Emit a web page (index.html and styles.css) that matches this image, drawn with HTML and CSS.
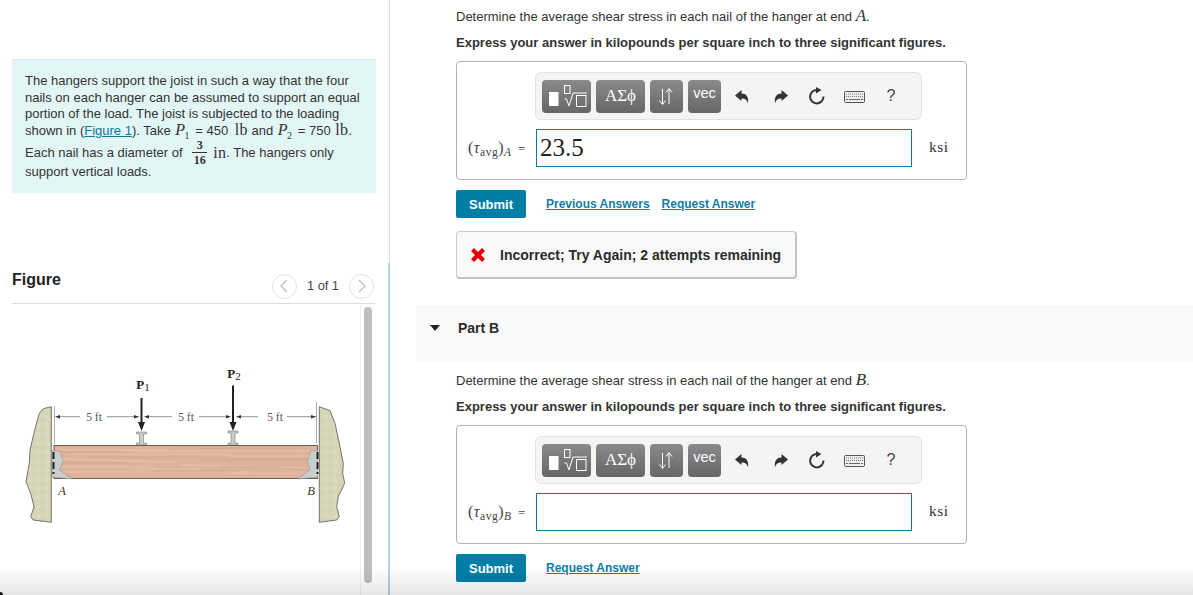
FILE: index.html
```html
<!DOCTYPE html>
<html lang="en">
  <head>
    <meta charset="UTF-8" />
    <title>Part A</title>
    <link rel="stylesheet" href="styles.css">
  </head>
  <body>
    <svg class="icon-defs" width="0" height="0">
      <symbol id="i-math" viewBox="0 0 49 33">
        <rect x="7" y="12" width="9.500" height="14" fill="#fff"/>
        <rect x="22.500" y="5.500" width="5.500" height="8" fill="none" stroke="#fff"/>
        <path d="M22.500 19l2 0 2.500 7 4-13h14" fill="none" stroke="#fff"/>
        <rect x="34.500" y="15.500" width="9.500" height="11" fill="none" stroke="#fff"/>
      </symbol>
      <symbol id="i-arrows" viewBox="0 0 33 33">
        <path d="M12.500 9v15M9.500 20.500l3 4 3-4M19 24V9M16 12.500l3-4 3 4" fill="none" stroke="#fff"/>
      </symbol>
      <symbol id="i-undo" viewBox="0 0 14 15">
        <path d="M0 6.500L6.500 1v3.500c4.500 0 7.500 3 6.500 10-1-4-3-5-6.500-5V12z" fill="#333"/>
      </symbol>
      <symbol id="i-reset" viewBox="0 0 18 18">
        <path d="M15.500 9.500A6.700 6.700 0 1 1 8.500 3" fill="none" stroke="#333" stroke-width="2"/>
        <path d="M8 0l5.500 3L8 6.500z" fill="#333"/>
      </symbol>
      <symbol id="i-keys" viewBox="0 0 21 12">
        <rect x="0.500" y="0.500" width="20" height="11" rx="1" fill="#eee" stroke="#555"/>
        <path d="M2 3h17M2 5.500h17" stroke="#777" stroke-dasharray="1 1"/>
        <path d="M2 8.500h2M5 8.500h11M17 8.500h2" stroke="#666"/>
      </symbol>
      <symbol id="i-prev" viewBox="0 0 10 14">
        <path d="M8 1L2 7l6 6" fill="none" stroke="#c4c4c4" stroke-width="1.500"/>
      </symbol>
    </svg>

    <div class="layout">
      <aside class="left">
        <div class="left-top">
          <div class="intro">
            The hangers support the joist in such a way that the four nails on each hanger can be assumed to support an equal portion of the load. The joist is subjected to the loading shown in (<a href="#">Figure 1</a>). Take <span class="math"><i>P</i><sub>1</sub></span> = 450 <span class="math lb">lb</span> and <span class="math"><i>P</i><sub>2</sub></span> = 750 <span class="math">lb</span>.
            <div class="intro-line">Each nail has a diameter of <span class="frac"><span class="num">3</span><span class="den">16</span></span> <span class="math">in</span>. The hangers only</div>
            <div class="intro-last">support vertical loads.</div>
          </div>
        </div>
        <div class="left-bottom">
          <div class="figure-head">
            <h2>Figure</h2>
            <div class="pager">
              <span class="page-btn"><svg width="10" height="14"><use href="#i-prev"/></svg></span>
              <span>1 of 1</span>
              <span class="page-btn"><svg class="flip" width="10" height="14"><use href="#i-prev"/></svg></span>
            </div>
          </div>
          <div class="figure-body">
            <svg class="joist" viewBox="12 304 348 291" width="348" height="291">
              <defs>
                <pattern id="stone" width="9" height="9" patternUnits="userSpaceOnUse">
                  <rect width="9" height="9" fill="#d6d5b7"/>
                  <circle cx="2.500" cy="2.500" r="1.300" fill="none" stroke="#e4e3cc" stroke-width="0.600"/>
                  <circle cx="7" cy="6.500" r="1" fill="none" stroke="#c6c5a4" stroke-width="0.500"/>
                </pattern>
              </defs>
              <path d="M51.300 406.700L43.300 408.700 39.300 413.300 34.700 430 30 450 29.300 463.300 26 481.700 30.700 493.300 34 506.700 30.700 516.700 33.300 520 51.300 522.300z" fill="url(#stone)" stroke="#555" stroke-width="0.800"/>
              <path d="M319.300 406.700L330 410.700 335 423.300 340 446.700 343.300 463.300 342.700 473.300 344.700 483.300 338.300 496.700 336.700 506.700 339.300 516.700 336.700 520 319.300 522.300z" fill="url(#stone)" stroke="#555" stroke-width="0.800"/>
              <path d="M54.500 406v38M316.500 402v41" stroke="#aaa"/>

              <rect x="54" y="445.500" width="263.500" height="33" fill="#dfb39b" stroke="#6b5a50"/>
              <path d="M56 450h110M70 454h160M56 459l120 3M120 451h195M200 456h117M180 465l135 3M56 467h100M60 472h190M230 473h85M130 469h70" stroke="#e9c6b0" stroke-width="0.800"/>
              <path d="M60 452h70M90 457h140M56 463h70M200 460h110M150 471h90M180 448h120M220 467h60" stroke="#d09f85" stroke-width="0.600"/>

              <path d="M52 450.500L60 451 61.700 458 63.300 461 59.300 470 72.700 479 52 477z" fill="#c9ced0" stroke="#888" stroke-width="0.500"/>
              <path d="M318 450.500L310 451 309 458 307 461 310 470 298 479 318 477z" fill="#c9ced0" stroke="#888" stroke-width="0.500"/>
              <path d="M53.500 452v22M317.500 452v22" stroke="#222" stroke-width="2" stroke-dasharray="7 3"/>

              <path d="M57 416.700h23M107 416.700h32M148 416.700h24M199 416.700h28M240 416.700h18M287 416.700h29" stroke="#777" stroke-width="0.800"/>
              <path d="M55 416.700l5-1.800v3.600zM139 416.700l-5-1.800v3.600zM144 416.700l5-1.800v3.600zM231 416.700l-5-1.800v3.600zM236 416.700l5-1.800v3.600zM316 416.700l-5-1.800v3.600z" fill="#333"/>
              <text class="dim" x="94" y="421">5 ft</text>
              <text class="dim" x="186" y="421">5 ft</text>
              <text class="dim" x="275" y="421">5 ft</text>

              <path d="M141.500 398v26M233 385.500v38.500" stroke="#222" stroke-width="2"/>
              <path d="M138 422h7l-3.500 9zM229.500 422h7l-3.500 9z" fill="#222"/>
              <path d="M136.500 432h10v2h-3v9h3v2h-10v-2h3v-9h-3zM228 431h10v2h-3v10h3v2h-10v-2h3v-10h-3z" fill="#ccc" stroke="#666" stroke-width="0.500"/>

              <text class="load" x="143" y="389">P<tspan class="load-sub" dy="2">1</tspan></text>
              <text class="load" x="234" y="378">P<tspan class="load-sub" dy="2">2</tspan></text>
              <text class="end" x="62" y="495">A</text>
              <text class="end" x="311" y="495">B</text>
            </svg>
            <div class="scroll-track"><div class="scroll-thumb"></div></div>
          </div>
        </div>
      </aside>

      <main class="right">
        <section class="part">
          <p class="task">Determine the average shear stress in each nail of the hanger at end <span class="math-big"><i>A</i></span>.</p>
          <p class="hint">Express your answer in kilopounds per square inch to three significant figures.</p>
          <div class="answer">
            <div class="toolbar">
              <span class="tool tool-math"><svg width="49" height="33"><use href="#i-math"/></svg></span>
              <span class="tool tool-greek">&Alpha;&Sigma;&#981;</span>
              <span class="tool tool-arrows"><svg width="33" height="33"><use href="#i-arrows"/></svg></span>
              <span class="tool tool-vec">vec</span>
              <span class="plain p-undo"><svg width="14" height="15"><use href="#i-undo"/></svg></span>
              <span class="plain p-redo"><svg class="flip" width="14" height="15"><use href="#i-undo"/></svg></span>
              <span class="plain p-reset"><svg width="18" height="18"><use href="#i-reset"/></svg></span>
              <span class="plain p-keys"><svg width="21" height="12"><use href="#i-keys"/></svg></span>
              <span class="plain p-help">?</span>
            </div>
            <div class="answer-row">
              <span class="answer-label">(<i>&tau;</i><sub>avg</sub>)<sub><i>A</i></sub> <span class="eq">=</span></span>
              <div class="answer-input">23.5</div>
              <span class="unit">ksi</span>
            </div>
          </div>
          <div class="actions">
            <button class="submit">Submit</button>
            <a href="#">Previous Answers</a>
            <a href="#">Request Answer</a>
          </div>
          <div class="feedback">
            <svg width="14" height="14" viewBox="0 0 14 14"><path d="M0 3L3 0 7 4 11 0 14 3 10 7 14 11 11 14 7 10 3 14 0 11 4 7z" fill="#e60000"/></svg>
            <span>Incorrect; Try Again; 2 attempts remaining</span>
          </div>
        </section>

        <div class="part-band">
          <span class="caret"></span>
          <h3>Part B</h3>
        </div>

        <section class="part part-b">
          <p class="task">Determine the average shear stress in each nail of the hanger at end <span class="math-big"><i>B</i></span>.</p>
          <p class="hint">Express your answer in kilopounds per square inch to three significant figures.</p>
          <div class="answer answer-b">
            <div class="toolbar">
              <span class="tool tool-math"><svg width="49" height="33"><use href="#i-math"/></svg></span>
              <span class="tool tool-greek">&Alpha;&Sigma;&#981;</span>
              <span class="tool tool-arrows"><svg width="33" height="33"><use href="#i-arrows"/></svg></span>
              <span class="tool tool-vec">vec</span>
              <span class="plain p-undo"><svg width="14" height="15"><use href="#i-undo"/></svg></span>
              <span class="plain p-redo"><svg class="flip" width="14" height="15"><use href="#i-undo"/></svg></span>
              <span class="plain p-reset"><svg width="18" height="18"><use href="#i-reset"/></svg></span>
              <span class="plain p-keys"><svg width="21" height="12"><use href="#i-keys"/></svg></span>
              <span class="plain p-help">?</span>
            </div>
            <div class="answer-row">
              <span class="answer-label">(<i>&tau;</i><sub>avg</sub>)<sub><i>B</i></sub> <span class="eq">=</span></span>
              <div class="answer-input"></div>
              <span class="unit">ksi</span>
            </div>
          </div>
          <div class="actions">
            <button class="submit">Submit</button>
            <a href="#">Request Answer</a>
          </div>
        </section>
      </main>
    </div>
    <div class="bottom-shade"></div>
    <div class="corner"></div>
  </body>
</html>
```

FILE: styles.css
```css
html,
body {
  margin: 0;
  height: 595px;
  overflow: hidden;
  background-color: #fff;
}
body {
  font-family: "Liberation Sans", Arial, sans-serif;
  font-size: 13px;
  color: #333;
  position: relative;
}
.icon-defs {
  position: absolute;
}
.layout {
  display: flex;
  height: 595px;
}

/* left pane */
.left {
  width: 390px;
  flex: none;
  display: flex;
  flex-direction: column;
}
.left-top {
  height: 263px;
  padding: 59px 13px 0 12px;
  box-sizing: border-box;
  border-right: 1px solid #ddd;
}
.intro {
  background-color: #e3f6f6;
  border-top: 1px solid #d5e6e6;
  padding: 13px 13px 0;
  height: 120px;
  line-height: 16.600px;
}
.intro a {
  color: #0c78a0;
}
.intro-line {
  margin-top: 3px;
  display: flex;
  align-items: center;
  height: 22px;
  white-space: pre;
}
.intro-last {
  margin-top: 0;
}
.math {
  font-family: "Liberation Serif", serif;
  font-size: 16px;
  line-height: 0;
  letter-spacing: 0.300px;
  margin-left: 1px;
}
.lb {
  margin-left: 3px;
}
.math sub {
  font-size: 10px;
  line-height: 0;
  margin-left: -1px;
  margin-right: 2px;
}
.frac {
  display: inline-flex;
  flex-direction: column;
  align-items: center;
  font-family: "Liberation Serif", serif;
  font-weight: bold;
  font-size: 12px;
  line-height: 12px;
  margin: 0 5px 0 6px;
  width: 15px;
}
.frac .num {
  border-bottom: 1px solid #333;
  width: 100%;
  padding-bottom: 1px;
  margin-top: -2px;
  text-align: center;
}
.frac .den {
  padding-top: 1px;
}
.left-bottom {
  flex: 1;
  min-height: 0;
  padding-left: 12px;
  border-right: 2px solid #b9cfe3;
  width: 390px;
  box-sizing: border-box;
}
.figure-head {
  width: 363px;
  height: 40px;
  border-bottom: 1px solid #ddd;
  display: flex;
  justify-content: space-between;
  align-items: flex-start;
}
.figure-head h2 {
  margin: 8px 0 0;
  font-size: 16px;
  line-height: 18px;
  color: #222;
}
.pager {
  display: flex;
  align-items: center;
  gap: 10px;
  margin-top: 9px;
  margin-right: 1px;
  font-size: 12.800px;
  line-height: 28px;
  color: #444;
}
.page-btn {
  width: 25px;
  height: 25px;
  border: 1px solid #e2e2e2;
  border-radius: 50%;
  box-sizing: border-box;
  display: flex;
  align-items: center;
  justify-content: center;
}
.figure-body {
  display: flex;
  height: 291px;
}
.joist {
  flex: none;
  display: block;
}
.joist text {
  font-family: "Liberation Serif", serif;
}
.dim {
  font-size: 11.500px;
  fill: #555;
  text-anchor: middle;
}
.load {
  font-size: 13px;
  font-weight: bold;
  fill: #222;
  text-anchor: middle;
}
.load-sub {
  font-size: 11px;
  font-weight: normal;
}
.end {
  font-size: 12.500px;
  font-style: italic;
  fill: #333;
  text-anchor: middle;
}
.scroll-track {
  width: 15px;
  border-left: 1px solid #eee;
  box-sizing: border-box;
  padding: 3px 3px 12px 3px;
}
.scroll-thumb {
  height: 276px;
  width: 8px;
  border-radius: 4px;
  background-color: #bfbfbf;
}

/* right pane */
.right {
  flex: 1;
  min-width: 0;
}
.part {
  padding-left: 66px;
}
.task {
  margin: 0;
  padding-top: 8px;
  line-height: 17px;
}
.math-big {
  font-family: "Liberation Serif", serif;
  font-size: 17px;
  line-height: 0;
}
.hint {
  margin: 9px 0 0;
  font-weight: bold;
  line-height: 17px;
}
.answer {
  width: 511px;
  height: 119px;
  margin-top: 10px;
  box-sizing: border-box;
  border: 1px solid #b3b3b3;
  border-radius: 4px;
  padding-top: 10px;
}
.answer-b {
  margin-top: 10px;
}
.toolbar {
  margin-left: 78px;
  width: 387px;
  height: 48px;
  box-sizing: border-box;
  background-color: #f4f4f4;
  border: 1px solid #e3e3e3;
  border-radius: 6px;
  display: flex;
  align-items: center;
  padding-left: 6px;
}
.tool {
  height: 33px;
  border-radius: 4px;
  background: linear-gradient(#8a8a8a, #666);
  color: #fff;
  display: flex;
  align-items: center;
  justify-content: center;
  margin-right: 5px;
  flex: none;
}
.tool svg {
  display: block;
}
.tool-math {
  width: 49px;
}
.tool-greek {
  width: 49px;
  font-family: "Liberation Serif", serif;
  font-size: 17px;
}
.tool-arrows {
  width: 33px;
}
.tool-vec {
  width: 33px;
  font-size: 14.500px;
  padding-bottom: 7px;
  box-sizing: border-box;
}
.plain {
  display: flex;
  align-items: center;
  justify-content: center;
  width: 20px;
  flex: none;
  color: #444;
}
.p-undo {
  margin-left: 6px;
}
.p-redo {
  margin-left: 19px;
}
.p-reset {
  margin-left: 16px;
}
.p-keys {
  margin-left: 17px;
  width: 21px;
  padding-top: 2px;
}
.p-help {
  margin-left: 16px;
  font-size: 16px;
}
.flip {
  transform: scaleX(-1);
}
.answer-row {
  display: flex;
  align-items: center;
  margin-top: 9px;
  padding-left: 11px;
}
.answer-label {
  width: 68px;
  flex: none;
  font-family: "Liberation Serif", serif;
  font-size: 16px;
  letter-spacing: 0.500px;
  color: #444;
  white-space: nowrap;
}
.answer-label sub {
  font-size: 11.500px;
  line-height: 0;
  vertical-align: -3px;
}
.eq {
  font-size: 13px;
  margin-left: 2px;
}
.answer-input {
  width: 376px;
  height: 38px;
  box-sizing: border-box;
  border: 1px solid #0b789f;
  font-family: "Liberation Serif", serif;
  font-size: 25px;
  line-height: 35px;
  padding-left: 3px;
  color: #222;
}
.unit {
  margin-left: 17px;
  padding-bottom: 2px;
  font-family: "Liberation Serif", serif;
  font-size: 15.500px;
  letter-spacing: 0.500px;
  color: #333;
}
.actions {
  display: flex;
  align-items: center;
  margin-top: 10px;
}
.submit {
  width: 70px;
  height: 28px;
  border: 0;
  border-radius: 2px;
  background-color: #007ea6;
  color: #fff;
  font-family: inherit;
  font-size: 13px;
  font-weight: bold;
  margin-right: 20px;
}
.actions a {
  color: #0f7ea6;
  font-size: 12px;
  font-weight: bold;
  margin-right: 12px;
}
.feedback {
  width: 341px;
  height: 48px;
  margin-top: 13px;
  box-sizing: border-box;
  background-color: #f9f9f9;
  border: 1px solid #ccc;
  border-bottom: 2px solid #c4c4c4;
  border-right: 2px solid #c4c4c4;
  border-radius: 4px;
  display: flex;
  align-items: center;
  padding-left: 14px;
  padding-top: 1px;
  gap: 15px;
  font-size: 14px;
  font-weight: bold;
  color: #2b2b2b;
  white-space: nowrap;
}
.part-band {
  margin: 26px 0 0 26px;
  height: 57px;
  background-color: #f9f9f9;
  display: flex;
  align-items: flex-start;
  padding-left: 14px;
}
.caret {
  width: 0;
  height: 0;
  margin-top: 20px;
  border-left: 5.500px solid transparent;
  border-right: 5.500px solid transparent;
  border-top: 6px solid #222;
}
.part-band h3 {
  margin: 14px 0 0 18px;
  font-size: 14px;
  line-height: 18px;
  color: #2b2b2b;
}
.part-b .task {
  padding-top: 10px;
}

/* window edge */
.bottom-shade {
  position: absolute;
  left: 0;
  right: 0;
  bottom: 0;
  height: 28px;
  background: linear-gradient(rgba(0, 0, 0, 0), rgba(0, 0, 0, 0.1));
  pointer-events: none;
}
.corner {
  position: absolute;
  left: 0;
  bottom: 0;
  width: 3px;
  height: 3px;
  background-color: #111;
  border-top-right-radius: 3px;
}
```
